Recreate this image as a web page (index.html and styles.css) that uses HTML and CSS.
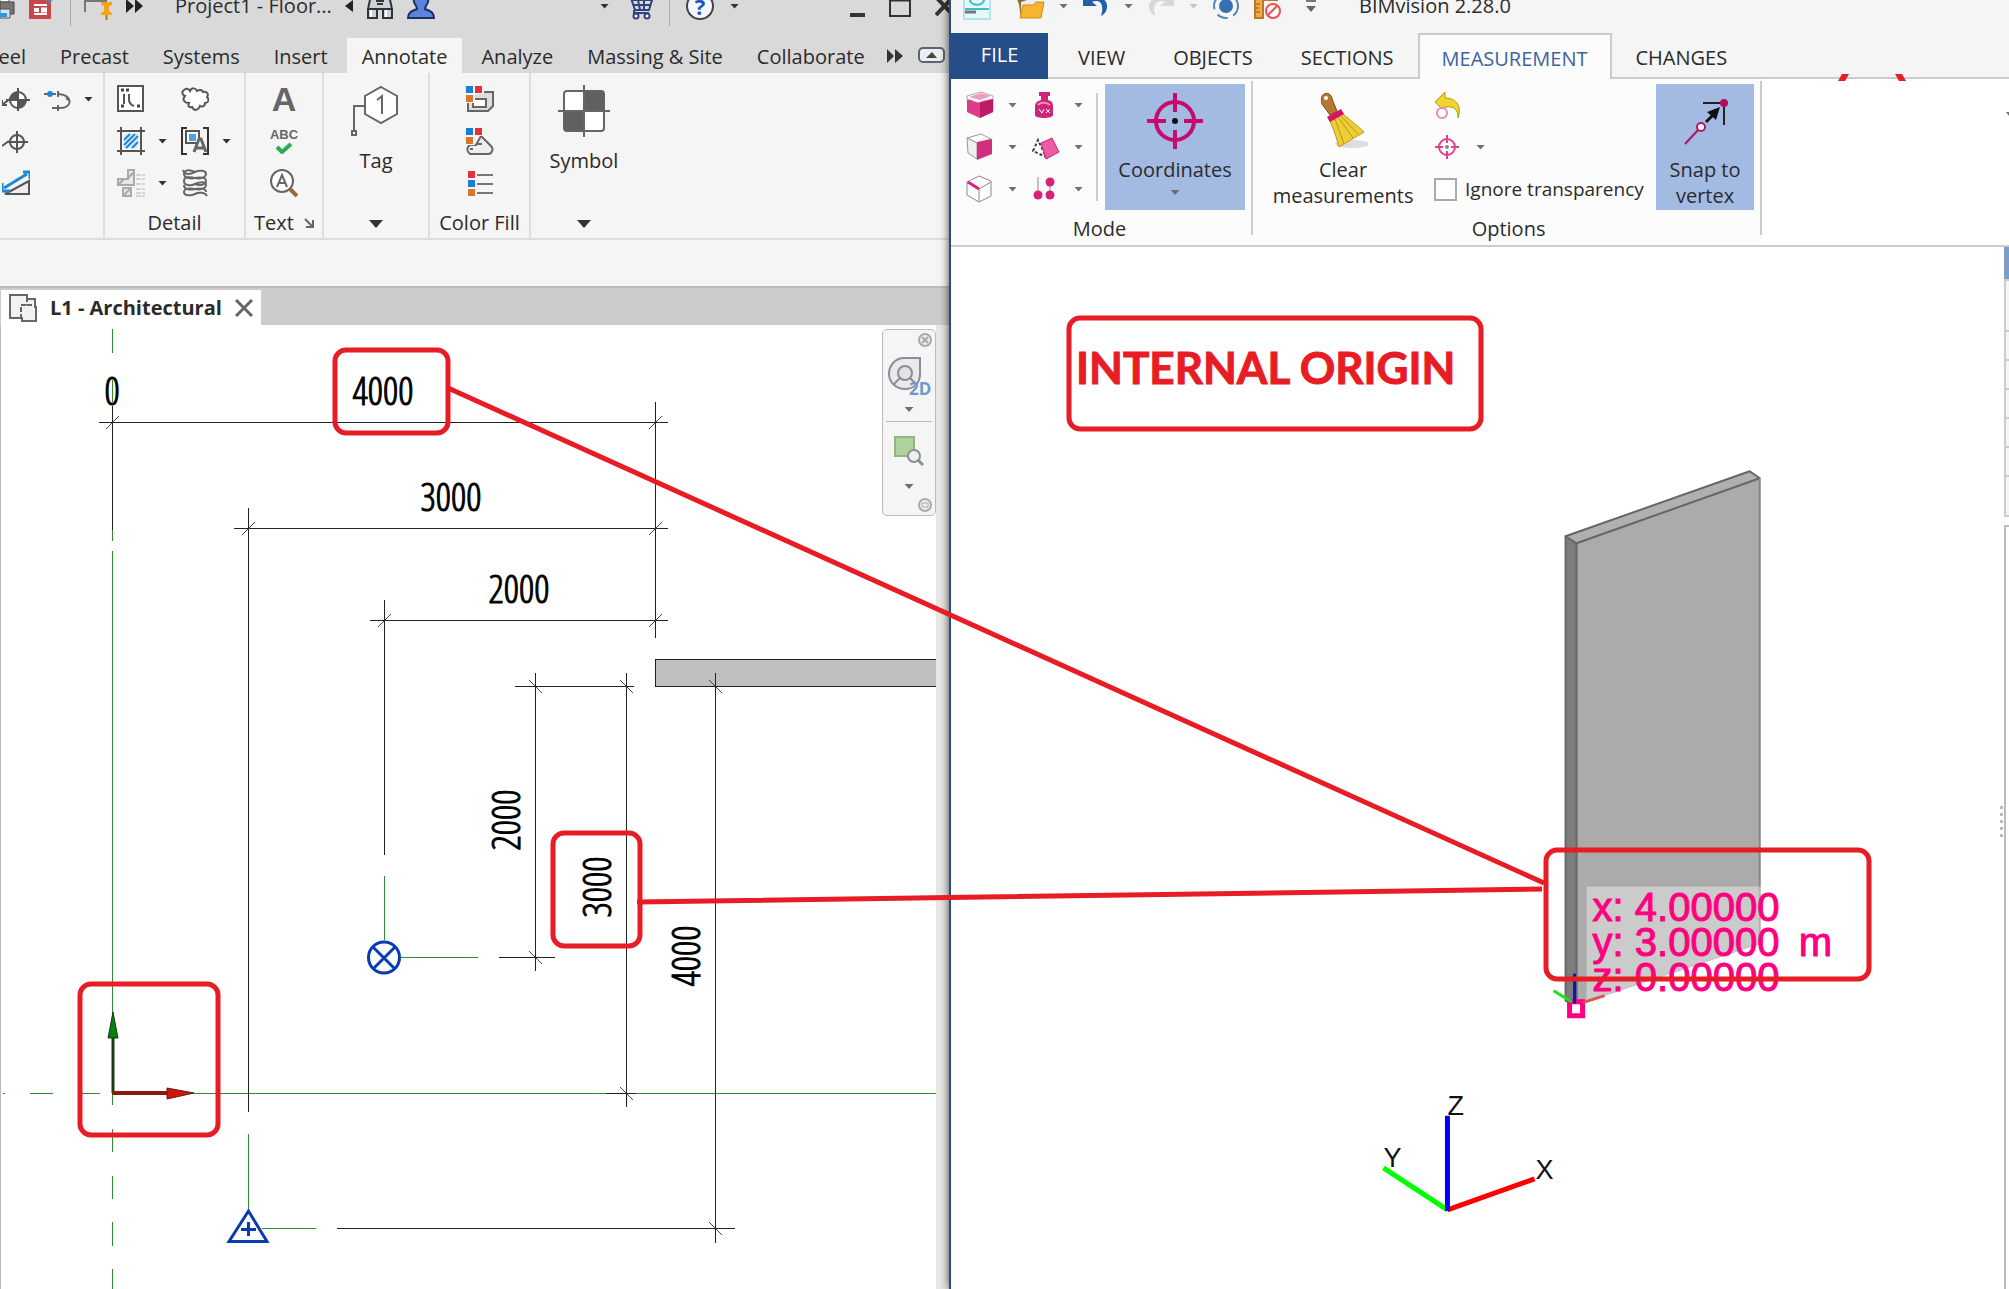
FILE: index.html
```html
<!DOCTYPE html>
<html lang="en">
<head>
<meta charset="utf-8">
<title>Internal origin</title>
<link rel="stylesheet" href="styles.css">
</head>
<body>
<main class="desk">

<section class="window revit">
  <header class="titlebar">
    <div class="title-row">
      <button class="icon" aria-label="Print"><svg width="16" height="28" viewBox="0 0 16 28"><path d="M0 4h9v6H0z" fill="#fff" stroke="#666"/><path d="M0 10h14v12H0z" fill="#777" stroke="#444"/><path d="M0 17h10v9H0z" fill="#cde6fa" stroke="#555"/><path d="M0 21h7v4H0z" fill="#2f95e0"/></svg></button>
      <button class="icon" aria-label="Export PDF"><svg width="28" height="28" viewBox="0 0 28 28"><path d="M0 2h22v25H0z" fill="#c8474b"/><path d="M5 13h13M5 22h13M5 17h5M5 19h5" stroke="#fff" stroke-width="2"/><path d="M12 15.500h6v5h-6z" fill="#fff"/><path d="M12 6h8V0l8 6-8 4z" fill="#2b8fe0"/></svg></button>
      <span class="bar"></span>
      <button class="icon" aria-label="Aligned dimension"><svg width="28" height="28" viewBox="0 0 28 28"><path d="M1 6v14M1 9h22" stroke="#777" stroke-width="2" fill="none"/><path d="M17 10h11v3l-3 1v5l3 2v2H17v-2l3-2v-5l-3-1z" fill="#f2a614"/><path d="M22.500 23v5" stroke="#a87a1c" stroke-width="2"/></svg></button>
      <button class="icon" aria-label="More tools"><svg width="18" height="14" viewBox="0 0 18 14"><path d="M1 0l8 7-8 7zM10 0l8 7-8 7z" fill="#222"/></svg></button>
      <h1 class="doc-title">Project1 - Floor...</h1>
      <button class="icon" aria-label="Collapse search"><svg width="8" height="12" viewBox="0 0 8 12"><path d="M8 0v12L0 6z" fill="#222"/></svg></button>
      <button class="icon" aria-label="Search"><svg width="28" height="28" viewBox="0 0 28 28"><path d="M5 3h6v6h6V3h6l3 14v9h-9v-9h-6v9H2v-9z" fill="#ccd1d8" stroke="#333" stroke-width="2"/><path d="M2 17h9M17 17h9M11 12h6" stroke="#333" stroke-width="2"/><path d="M5 18v7M20 18v7" stroke="#fff" stroke-width="2"/></svg></button>
      <button class="icon" aria-label="Sign in"><svg width="28" height="28" viewBox="0 0 28 28"><path d="M14 1c5 0 8 4 7 9-1 3-3 4-3 7 5 2 9 3 9 9H1c0-6 4-7 9-9 0-3-2-4-3-7-1-5 2-9 7-9z" fill="#5b84de" stroke="#1d2f62" stroke-width="2"/></svg></button>
      <div class="title-right">
        <span class="caret dark"></span>
        <button class="icon" aria-label="Store"><svg width="28" height="28" viewBox="0 0 28 28"><path d="M1 3h4l5 15h14l3-10H7M8 13h17M13 8l2 10M19 8v10" fill="none" stroke="#31427e" stroke-width="2"/><path d="M9 18v3h15" fill="none" stroke="#31427e" stroke-width="2"/><circle cx="11" cy="24" r="2.500" fill="#fff" stroke="#31427e" stroke-width="2"/><circle cx="22" cy="24" r="2.500" fill="#fff" stroke="#31427e" stroke-width="2"/></svg></button>
        <span class="bar"></span>
        <button class="icon help" aria-label="Help">?</button>
        <span class="caret dark"></span>
      </div>
      <div class="win-buttons">
        <button class="icon" aria-label="Minimize"><svg width="15" height="22" viewBox="0 0 15 22"><path d="M0 20h15" stroke="#333" stroke-width="4"/></svg></button>
        <button class="icon" aria-label="Maximize"><svg width="22" height="24" viewBox="0 0 22 24"><path d="M1 4h20v18H1z" fill="none" stroke="#333" stroke-width="2"/><path d="M0 6h22" stroke="#333" stroke-width="3"/></svg></button>
        <button class="icon" aria-label="Close"><svg width="14" height="20" viewBox="0 0 14 20"><path d="M1 1l17 18M18 1L1 19" stroke="#333" stroke-width="4"/></svg></button>
      </div>
    </div>
  </header>

  <nav class="tabs" aria-label="Ribbon tabs">
    <button class="tab cut">Steel</button>
    <button class="tab">Precast</button>
    <button class="tab">Systems</button>
    <button class="tab">Insert</button>
    <button class="tab on">Annotate</button>
    <button class="tab">Analyze</button>
    <button class="tab">Massing &amp; Site</button>
    <button class="tab">Collaborate</button>
    <div class="tab-tools">
      <button class="icon" aria-label="More tabs"><svg width="16" height="14" viewBox="0 0 16 14"><path d="M0 0l7 7-7 7zM8 0l8 7-8 7z" fill="#333"/></svg></button>
      <button class="icon" aria-label="Minimize ribbon"><svg width="28" height="17" viewBox="0 0 28 17"><rect x="1" y="1" width="25" height="14" rx="4" fill="#eceff2" stroke="#5a6472" stroke-width="2"/><path d="M8 11h11l-5-6z" fill="#444"/></svg></button>
    </div>
  </nav>

  <div class="ribbon">
    <div class="panel p-first">
      <div class="grid g3">
        <button class="icon" aria-label="Spot elevation"><svg width="28" height="28" viewBox="0 0 28 28"><circle cx="16" cy="15" r="8" fill="#fff" stroke="#555" stroke-width="2"/><path d="M16 7v8H8a8 8 0 0 1 8-8zM16 23v-8h8a8 8 0 0 1-8 8z" fill="#555"/><path d="M16 3v23M4 15h24M8 14l-7 5M0 15v5h5" fill="none" stroke="#555" stroke-width="2"/></svg></button>
        <button class="icon" aria-label="Linear array"><svg width="28" height="28" viewBox="0 0 28 28"><path d="M1 9h12M16 9c14 1 14 14 1 14M9 23h10M15 6v6M15 20v6M23 13l4 3" fill="none" stroke="#666" stroke-width="2"/><circle cx="7" cy="9" r="3" fill="#1e88d8"/></svg></button>
        <span class="caret dark"></span>
        <button class="icon" aria-label="Spot coordinate"><svg width="28" height="28" viewBox="0 0 28 28"><circle cx="15" cy="15" r="7" fill="none" stroke="#555" stroke-width="2"/><path d="M15 4v22M5 15h21M7 14l-7 5" fill="none" stroke="#555" stroke-width="2"/></svg></button><i></i><i></i>
        <button class="icon" aria-label="Spot slope"><svg width="28" height="28" viewBox="0 0 28 28"><path d="M3 25h24V12z" fill="#eee" stroke="#555" stroke-width="2"/><path d="M2 19L25 5M21 3h7v7M0 14v8h8" fill="none" stroke="#1e88d8" stroke-width="3"/></svg></button>
      </div>
    </div>
    <div class="panel">
      <div class="grid g4">
        <button class="icon" aria-label="Detail line"><svg width="28" height="28" viewBox="0 0 28 28"><path d="M1 1h25v25H1z" fill="#fff" stroke="#555" stroke-width="2"/><path d="M4 5h3M9 5h3M4 21h3M20 21h3" stroke="#444" stroke-width="3"/><path d="M7 9v10M12 9v5c0 4 2 6 5 7" fill="none" stroke="#555" stroke-width="2"/></svg></button><i></i>
        <button class="icon" aria-label="Revision cloud"><svg width="28" height="28" viewBox="0 0 28 28"><path d="M2 6c3-4 6-2 7 0 2-4 6-3 7 0 3-2 5-1 6 1 4-1 6 2 4 5 3 3 1 6-2 6 0 4-4 4-5 3-2 5-6 5-8 1-4 1-4-2-3-4-5 0-7-4-4-7-3-1-3-4-2-5z" fill="#fff" stroke="#555" stroke-width="2"/></svg></button><i></i>
        <button class="icon" aria-label="Region"><svg width="28" height="28" viewBox="0 0 28 28"><path d="M7 7h14v14H7z" fill="#d4eafb"/><path d="M7 13l6-6M7 18L18 7M9 21L21 9M15 21l6-6" stroke="#1e88d8" stroke-width="2"/><path d="M4 0v28M24 0v28M0 4h28M0 24h28" stroke="#555" stroke-width="2"/></svg></button>
        <span class="caret dark"></span>
        <button class="icon" aria-label="Detail group"><svg width="28" height="28" viewBox="0 0 28 28"><path d="M6 1H1v26h5M22 1h5v26h-5" fill="none" stroke="#333" stroke-width="2"/><path d="M5 4h13v12H5z" fill="#fff" stroke="#555" stroke-width="2"/><path d="M8 7h7v7H8z" fill="#4ba3e4"/><path d="M13 25l5-13h2l5 13M15 21h8" fill="#f5f5f5" stroke="#666" stroke-width="3"/></svg></button>
        <span class="caret dark"></span>
        <button class="icon" aria-label="Component"><svg width="28" height="28" viewBox="0 0 28 28"><path d="M11 1h6v15H1v-6h10zM6 19h8v8H6zM6 27l8-8M1 16l6-6M11 9l6-6" fill="#e8e8e8" stroke="#aaa" stroke-width="2"/><path d="M19 6h9M19 10h9M19 15h9M19 20h9M19 24h9M19 27h9" stroke="#b4b4b4" stroke-width="1" stroke-dasharray="5 1"/></svg></button>
        <span class="caret dark"></span>
        <button class="icon" aria-label="Insulation"><svg width="28" height="28" viewBox="0 0 28 28"><path d="M3 1C4 5 9 6 14 4S25 1 25 5s-6 5-11 4S3 8 3 14s6 6 11 4 11-5 11-2 0-6-5-7-6 0-9 1" fill="none" stroke="none"/><path d="M2 1c2 6 8 4 12 2s11-2 11 2-7 5-11 4-11-2-11 3 7 5 11 3 11-3 11 1-7 5-11 4-11-1-11 3 7 4 11 2 10-2 12 2" fill="none" stroke="#666" stroke-width="2"/><path d="M14 3C8 0 3 1 3 5s7 5 11 4 11-1 11 3-7 5-11 3M3 16c0 5 7 5 11 4s11-1 11 3" fill="none" stroke="#666" stroke-width="2"/></svg></button>
      </div>
      <h2 class="label">Detail</h2>
    </div>
    <div class="panel p-text">
      <div class="grid g1">
        <button class="icon glyph" aria-label="Text">A</button>
        <button class="icon abc" aria-label="Check spelling">ABC<svg width="18" height="12" viewBox="0 0 18 12"><path d="M2 5l5 5 9-8" fill="none" stroke="#2dab55" stroke-width="4"/></svg></button>
        <button class="icon" aria-label="Find and replace"><svg width="28" height="28" viewBox="0 0 28 28"><circle cx="12" cy="12" r="11" fill="#fff" stroke="#666" stroke-width="2"/><path d="M7 18l5-12 5 12M9 14h6" fill="none" stroke="#666" stroke-width="2"/><path d="M20 20l7 7" stroke="#9a6a35" stroke-width="4"/></svg></button>
      </div>
      <h2 class="label">Text <svg width="10" height="10" viewBox="0 0 10 10"><path d="M1 1l7 7M9 2v7H2" fill="none" stroke="#666" stroke-width="2"/></svg></h2>
    </div>
    <div class="panel p-big">
      <button class="big">
        <svg width="52" height="52" viewBox="0 0 52 52"><path d="M31 2l16 9v18l-16 9-16-9V11z" fill="#fff" stroke="#666" stroke-width="2"/><path d="M15 21H4v26M27 15l5-4v18" fill="none" stroke="#666" stroke-width="2"/><path d="M2 46h4v4H2z" fill="#fff" stroke="#666" stroke-width="2"/></svg>
        Tag</button>
      <span class="caret dark wide"></span>
    </div>
    <div class="panel p-fill">
      <div class="grid g1">
        <button class="icon" aria-label="Duct legend"><svg width="28" height="28" viewBox="0 0 28 28"><path d="M2 26V18l7-11h18v14l-5 5z" fill="#ddd" stroke="#666" stroke-width="2"/><path d="M7 14h13v8H7z" fill="#fff" stroke="#666" stroke-width="2"/><path d="M0 0h18v9H9v9H0z" fill="#f5f5f5"/><path d="M0 1h7v7H0z" fill="#1580d8"/><path d="M9 1h7v7H9z" fill="#e8303a"/><path d="M0 10h7v7H0z" fill="#d8772b"/></svg></button>
        <button class="icon" aria-label="Pipe legend"><svg width="28" height="28" viewBox="0 0 28 28"><path d="M4 27c-5-4-2-10 3-9h3l5-9 10 10c3 3 1 8-3 8z" fill="#eee" stroke="#666" stroke-width="2"/><path d="M10 17h6M4 22h3" stroke="#666" stroke-width="2"/><path d="M0 0h17v9H9v9H0z" fill="#f5f5f5"/><path d="M0 1h7v7H0z" fill="#1580d8"/><path d="M9 1h7v7H9z" fill="#e8303a"/><path d="M0 10h7v7H0z" fill="#d8772b"/></svg></button>
        <button class="icon" aria-label="Color fill legend"><svg width="28" height="28" viewBox="0 0 28 28"><path d="M2 2h7v7H2z" fill="#e8303a"/><path d="M2 11h7v7H2z" fill="#1580d8"/><path d="M2 20h7v7H2z" fill="#d8772b"/><path d="M11 6h16M11 15h16M11 24h16" stroke="#777" stroke-width="2"/></svg></button>
      </div>
      <h2 class="label">Color Fill</h2>
    </div>
    <div class="panel p-big last">
      <button class="big">
        <svg width="52" height="52" viewBox="0 0 52 52"><rect x="6" y="6" width="40" height="40" rx="3" fill="#fff" stroke="#666" stroke-width="2"/><path d="M26 6h17a3 3 0 0 1 3 3v17H26zM26 26H6v17a3 3 0 0 0 3 3h17z" fill="#606060"/><path d="M26 0v52M0 26h52" stroke="#666" stroke-width="2"/></svg>
        Symbol</button>
      <span class="caret dark wide"></span>
    </div>
  </div>
  <div class="options-bar"></div>
  <div class="doc-tabs">
    <div class="doc-tab">
      <svg width="28" height="28" viewBox="0 0 28 28"><path d="M1 1h17v4h8v8h1v14H13v-3H1z" fill="#f2f2f2" stroke="#666" stroke-width="2"/><path d="M18 3v8M18 11h9M12 11h5M12 13v13" fill="none" stroke="#666" stroke-width="2" stroke-dasharray="5 2"/></svg>
      <span>L1 - Architectural</span>
      <button class="icon" aria-label="Close view"><svg width="18" height="18" viewBox="0 0 18 18"><path d="M1 1l16 16M17 1L1 17" stroke="#666" stroke-width="3"/></svg></button>
    </div>
  </div>

  <div class="plan">
    <svg class="drawing" viewBox="0 325 950 964" preserveAspectRatio="xMinYMin slice" role="img" aria-label="Floor plan with dimensions">
      <g class="ref">
        <path d="M112.500 329v24M112.500 380v22M112.500 530v11M112.500 551v554M112.500 1129v23M112.500 1176v23M112.500 1222v24M112.500 1269v20"/>
        <path d="M3 1093.500h2M30 1093.500h23M78 1093.500h22M112 1093.500h825"/>
        <path d="M384.500 876v64M401 957.500h77M248.500 1134v76M262 1228.500h54"/>
      </g>
      <path d="M655.500 659.500H937M655.500 686.500H937M655.500 659v28" class="dim"/>
      <path d="M656 660h281v26H656z" fill="#bfbfbf"/>
      <g class="dim">
        <path d="M112.500 406v124M99 422.500h569M655.500 402v236"/>
        <path d="M234 528.500h434M248.500 508v604"/>
        <path d="M370 620.500h298M384.500 600v255"/>
        <path d="M515 686.500h119M535.500 673v298M499 957.500h56M626.500 673v434M606 1093.500h30M715.500 673v570M337 1228.500h398"/>
      </g>
      <path class="tick" d="M106 429l13-13M649 429l13-13M242 535l13-13M649 535l13-13M378 627l13-13M649 627l13-13M529 680l13 13M620 680l13 13M709 680l13 13M529 951l13 13M620 1087l13 13M709 1222l13 13"/>
      <g class="num">
        <text x="112" y="405">0</text>
        <text x="383" y="405">4000</text>
        <text x="451" y="511">3000</text>
        <text x="519" y="603">2000</text>
        <text transform="rotate(-90 520 820)" x="520" y="820">2000</text>
        <text transform="rotate(-90 611 887)" x="611" y="887">3000</text>
        <text transform="rotate(-90 700 956)" x="700" y="956">4000</text>
      </g>
      <g fill="none" stroke="#0a3bb0" stroke-width="3">
        <circle cx="384" cy="957.500" r="15.500"/><path d="M373 947l22 22M395 947l-22 22"/>
        <path d="M248.500 1211L229 1241.500h38z"/><path d="M241 1229.500h15M248.500 1222v14"/>
      </g>
      <path d="M113 1093v-60" stroke="#173d14" stroke-width="3"/><path d="M113 1012l5 26h-10z" fill="#0b7d11" stroke="#173d14"/>
      <path d="M112 1093h58" stroke="#8a1a10" stroke-width="4"/><path d="M194 1093l-27-5v11z" fill="#d01510" stroke="#6b1a10"/>
    </svg>
    <div class="scroll"></div>
    <div class="navbar">
      <button class="icon nav-x" aria-label="Close navigation bar"><svg width="14" height="14" viewBox="0 0 14 14"><circle cx="7" cy="7" r="6" fill="#eee" stroke="#aaa" stroke-width="2"/><path d="M4 4l6 6M10 4l-6 6" stroke="#aaa" stroke-width="2"/></svg></button>
      <button class="icon" aria-label="Steering wheel 2D"><svg width="44" height="42" viewBox="0 0 44 42"><path d="M17 2h16v16c0 9-6 15-15 15S2 26 2 18 8 2 17 2z" fill="#e8eaee" stroke="#8a8d93" stroke-width="2"/><circle cx="18" cy="17" r="7" fill="#dfe3e8" stroke="#8a8d93" stroke-width="2"/><path d="M13 22l-6 6M23 22l6 6" stroke="#8a8d93" stroke-width="2"/><text x="22" y="39" class="two-d">2D</text></svg></button>
      <span class="caret"></span>
      <hr>
      <button class="icon zoom" aria-label="Zoom region"><svg width="30" height="30" viewBox="0 0 30 30"><path d="M1 1h19v19H1z" fill="#afd19c" stroke="#93b582" stroke-width="2"/><circle cx="20" cy="20" r="6" fill="#eef1f4" stroke="#8d8f92" stroke-width="2"/><path d="M24 24l5 5" stroke="#8d8f92" stroke-width="3"/></svg></button>
      <span class="caret"></span>
      <button class="icon nav-x" aria-label="Navigation options"><svg width="14" height="14" viewBox="0 0 14 14"><circle cx="7" cy="7" r="6" fill="#eee" stroke="#aaa" stroke-width="2"/><path d="M4 5h6v4H4z" fill="none" stroke="#aaa"/></svg></button>
    </div>
  </div>
</section>

<section class="window bim">
  <header class="titlebar">
    <div class="title-row">
      <svg width="28" height="28" viewBox="0 0 28 28"><path d="M1 1h26v26H1z" fill="#e6f8f8" stroke="#b4e4e6" stroke-width="2"/><path d="M7 9c2-5 12-5 14 0-3 5-11 5-14 0zM2 17h24" fill="none" stroke="#3cc3c8" stroke-width="2"/><path d="M2 20h11" stroke="#777" stroke-width="3"/></svg>
      <button class="icon m22" aria-label="Open"><svg width="30" height="28" viewBox="0 0 30 28"><path d="M1 5h14l9-3v24H6L4 12z" fill="#8a6a30"/><path d="M6 10l18-6v20H6z" fill="#eee"/><path d="M5 26l3-13h10l3-3h8l-3 16z" fill="#f5b52e" stroke="#cf9015"/></svg></button>
      <span class="caret m13"></span>
      <button class="icon m13" aria-label="Undo"><svg width="28" height="28" viewBox="0 0 28 28"><path d="M1 0v14h14l-5-4c7-3 13 1 9 14 10-5 9-23-13-19z" fill="#2160a8"/></svg></button>
      <span class="caret m13"></span>
      <button class="icon m13" aria-label="Redo"><svg width="28" height="28" viewBox="0 0 28 28"><path d="M27 0v14H13l5-4c-7-3-13 1-10 14C-2 19-1 1 22 5z" fill="#d8d8d8"/></svg></button>
      <span class="caret faint m13"></span>
      <button class="icon m13" aria-label="Show all"><svg width="28" height="28" viewBox="0 0 28 28"><circle cx="14" cy="14" r="7" fill="#3670ae"/><circle cx="14" cy="14" r="12" fill="none" stroke="#5584b8" stroke-width="2" stroke-dasharray="11 6"/></svg></button>
      <button class="icon m13" aria-label="Clear measurement"><svg width="28" height="28" viewBox="0 0 28 28"><path d="M1 1h22v7H9v18H1z" fill="#f3a844" stroke="#b57a2c" stroke-width="2"/><path d="M2 12h4M2 16h3M2 20h4" stroke="#7b5320" stroke-width="1"/><circle cx="19" cy="19" r="7" fill="#fff" stroke="#ee5050" stroke-width="2"/><path d="M14 23l9-9" stroke="#ee5050" stroke-width="2"/></svg></button>
      <button class="icon m22" aria-label="Customize"><svg width="10" height="14" viewBox="0 0 10 14"><path d="M0 2h10" stroke="#777" stroke-width="2"/><path d="M0 7h10l-5 6z" fill="#666"/></svg></button>
      <h1 class="doc-title">BIMvision 2.28.0</h1>
    </div>
  </header>
  <nav class="tabs" aria-label="Ribbon tabs">
    <button class="tab file">FILE</button>
    <span class="rest lead"></span>
    <button class="tab">VIEW</button>
    <button class="tab">OBJECTS</button>
    <button class="tab">SECTIONS</button>
    <button class="tab on">MEASUREMENT</button>
    <button class="tab">CHANGES</button>
    <span class="rest"></span>
  </nav>
  <div class="ribbon">
    <div class="group">
      <div class="tools">
        <div class="grid g4">
          <button class="icon" aria-label="Volume"><svg width="28" height="28" viewBox="0 0 28 28"><path d="M1 5l14-4 12 4v15l-13 6-12-5z" fill="#fff" stroke="#aaa"/><path d="M1 9c4-2 9 4 13 2s9-2 13-3v13l-13 6-13-6z" fill="#de3c8a"/><path d="M14 12v15l13-6V8z" fill="#bd1a69"/><path d="M3 6l11 3 11-4-10-3z" fill="#f39ac5"/></svg></button><span class="caret"></span>
          <button class="icon" aria-label="Weight"><svg width="28" height="28" viewBox="0 0 28 28"><path d="M7 1h11v4h-2v4c4 1 5 3 5 6v9c0 4-18 4-18 0v-9c0-3 2-5 6-6V5H7z" fill="#cd2676"/><path d="M6 14c2-3 9-3 12 0" stroke="#f28dbb" stroke-width="2" fill="none"/><path d="M7 18l3 4 2-4M14 18l4 4M18 18l-4 4" stroke="#fff" fill="none"/></svg></button><span class="caret"></span>
          <button class="icon" aria-label="Area"><svg width="28" height="28" viewBox="0 0 28 28"><path d="M1 5l14-4 10 5-14 4z" fill="#fff" stroke="#999"/><path d="M1 5l10 5v16L2 20z" fill="#f0f0f0" stroke="#999"/><path d="M11 9l15-3v15l-15 6z" fill="#d42d7f"/></svg></button><span class="caret"></span>
          <button class="icon" aria-label="Surface"><svg width="28" height="28" viewBox="0 0 28 28"><path d="M1 18l5-11 8 17z" fill="#fff" stroke="#444" stroke-width="2" stroke-dasharray="3 2"/><path d="M9 10l11-5 7 14-13 7z" fill="#ec5ba4" stroke="#bd2a72"/></svg></button><span class="caret"></span>
          <button class="icon" aria-label="Edge"><svg width="28" height="28" viewBox="0 0 28 28"><path d="M1 7l12-6 12 5v15l-12 6-12-7zM1 7l12 7 12-7M13 14v13" fill="#fff" stroke="#888"/><path d="M2 7l11 7" stroke="#dd2079" stroke-width="3"/></svg></button><span class="caret"></span>
          <button class="icon" aria-label="Count"><svg width="28" height="28" viewBox="0 0 28 28"><path d="M6 2v18M18 6v14" stroke="#888"/><circle cx="6" cy="20" r="4.500" fill="#d62377"/><circle cx="18" cy="20" r="4.500" fill="#d62377"/><circle cx="18" cy="7" r="4.500" fill="#d62377"/></svg></button><span class="caret"></span>
        </div>
        <span class="rule"></span>
        <button class="tall on">
          <svg width="58" height="58" viewBox="0 0 58 58"><circle cx="29" cy="29" r="19" fill="none" stroke="#c70a6b" stroke-width="4"/><path d="M29 1v19M29 38v19M1 29h19M38 29h19" stroke="#c70a6b" stroke-width="4"/><circle cx="29" cy="29" r="3" fill="#111"/></svg>
          <span>Coordinates</span><span class="caret"></span></button>
      </div>
      <h2 class="label">Mode</h2>
    </div>
    <div class="group g-options">
      <div class="tools">
        <button class="tall clear">
          <svg width="58" height="58" viewBox="0 0 58 58"><ellipse cx="38" cy="52" rx="17" ry="4" fill="#ddd"/><path d="M9 3c4-4 9 0 9 4l5 12-7 4L8 12c-1-3-1-7 1-9z" fill="#b97831" stroke="#75481a"/><circle cx="12" cy="6" r="2" fill="#fff"/><path d="M14 25l12-6c7 7 18 15 24 21l-25 15c-3-11-6-20-11-30z" fill="#edcf35" stroke="#b8981b"/><path d="M21 27l9 25M24 25l15 21M27 24l17 18" stroke="#b8981b"/><path d="M13 25l14-8 3 5-14 8z" fill="#d3126c"/></svg>
          <span>Clear<br>measurements</span></button>
        <div class="opts">
          <button class="icon" aria-label="Undo measurement"><svg width="28" height="28" viewBox="0 0 28 28"><path d="M1 11L11 1v6c12 0 17 9 13 20 0-9-4-12-13-11v5z" fill="#f0d42e" stroke="#b49516"/><circle cx="8" cy="22" r="5" fill="#fff" stroke="#e48bb8" stroke-width="2"/></svg></button>
          <div class="pair"><button class="icon" aria-label="Snap mode"><svg width="28" height="28" viewBox="0 0 28 28"><circle cx="13" cy="14" r="8" fill="none" stroke="#e3408b" stroke-width="2"/><path d="M13 2v8M13 18v8M1 14h8M17 14h8" stroke="#e3408b" stroke-width="2"/><circle cx="13" cy="14" r="2" fill="#888"/></svg></button><span class="caret"></span></div>
          <label class="check"><input type="checkbox"> Ignore transparency</label>
        </div>
        <button class="tall on snap">
          <svg width="58" height="58" viewBox="0 0 58 58"><path d="M9 52l14-15" stroke="#a81660" stroke-width="2"/><circle cx="25" cy="35" r="4" fill="#fff" stroke="#b5126a" stroke-width="2"/><path d="M27 11h21v22" fill="none" stroke="#222" stroke-width="2"/><path d="M30 30l8-8" stroke="#111" stroke-width="3"/><path d="M44 15l-4 13-9-8z" fill="#111"/><circle cx="48" cy="11" r="4" fill="#b80a5e"/></svg>
          <span>Snap to<br>vertex</span></button>
      </div>
      <h2 class="label">Options</h2>
    </div>
    <button class="more" aria-label="More ribbon groups"><svg width="3" height="4" viewBox="0 0 3 4"><path d="M0 0h3v4z" fill="#707070"/></svg></button>
  </div>
  <div class="viewer">
    <svg class="drawing" viewBox="952 247 1046 1042" preserveAspectRatio="xMinYMin slice" role="img" aria-label="Wall with coordinates">
      <g stroke="#666" stroke-width="2" stroke-linejoin="round">
        <path d="M1577 543l183-65v465l-183 61z" fill="#ababab" stroke="none"/>
        <path d="M1566 536l11 7v461l-11-4z" fill="#7d7d7d"/>
        <path d="M1566 536l184-65 10 7-183 65z" fill="#b0b0b0"/>
        <path d="M1760 478v465" fill="none" stroke="#858585"/>
      </g>
      <path d="M1577 1004l183-61" stroke="#999"/>
      <path d="M1587 886h247v122h-247z" fill="#fff" opacity=".38"/>
      <path d="M1570 1001h13v14h-13z" fill="#fff" stroke="#ff007f" stroke-width="5"/>
      <path d="M1554 990l18 11" stroke="#10e818" stroke-width="3"/><path d="M1583 1002l22-7" stroke="#e05252" stroke-width="3"/><path d="M1575 973v30" stroke="#1010c8" stroke-width="3"/>
      <g class="xyz"><text x="1593" y="920">x: 4.00000</text><text x="1593" y="955">y: 3.00000</text><text x="1799" y="955">m</text><text x="1593" y="990">z: 0.00000</text></g>
      <g stroke-width="5"><path d="M1448 1209l87-31" stroke="#f00"/><path d="M1448 1209l-64-42" stroke="#0f0"/><path d="M1448 1210v-95" stroke="#00f"/></g>
      <g class="axis"><text x="1448" y="1114">Z</text><text x="1384" y="1166">Y</text><text x="1536" y="1178">X</text></g>
    </svg>
    <div class="splitter"><i></i><i></i><i></i><i></i><i></i></div>
    <aside class="side"><div class="side-head"></div><div class="side-list"><i class="tall-row"></i><i></i><i></i><i></i><i></i><i></i></div><div class="side-tree"></div></aside>
  </div>
</section>

<svg class="markup" viewBox="0 0 2009 1289" preserveAspectRatio="xMinYMin slice" role="img" aria-label="Annotations">
  <g fill="none" stroke="#e81c24" stroke-width="5">
    <rect x="335" y="350" width="113" height="83" rx="11"/>
    <rect x="80" y="984" width="138" height="151" rx="11"/>
    <rect x="553" y="833" width="87" height="113" rx="11"/>
    <rect x="1069" y="318" width="412" height="111" rx="11"/>
    <rect x="1546" y="850" width="323" height="129" rx="11"/>
    <path d="M448 388l1096 495M637 902l905-13"/>
  </g>
  <path d="M1842 74h7l-4 7h-7zM1895 74h7l4 7h-7z" fill="#e81c24"/>
  <text x="1076" y="384" class="note">INTERNAL ORIGIN</text>
</svg>
</main>
</body>
</html>
```
FILE: styles.css
```css
* { box-sizing: border-box; }
body { margin: 0; font-family: "Open Sans", "Noto Sans", sans-serif; font-size: 20px; line-height: 26px; color: #2b2b2b; }
button { font: inherit; color: inherit; background: none; border: 0; padding: 0; margin: 0; white-space: nowrap; }
svg { display: block; flex: none; }
h1, h2 { margin: 0; font-size: 20px; font-weight: 400; }
hr { margin: 0; }

.desk { position: relative; display: flex; height: 100vh; overflow: hidden; }
.window { display: flex; flex-direction: column; min-width: 0; }
.revit { flex: 950 1 0; background: #d9d9d9; }
.bim { flex: 1059 1 0; background: #fff; border-left: 2px solid #254d87; box-shadow: 0 0 9px rgba(0, 0, 0, .7); z-index: 1; }
.markup { position: absolute; inset: 0; width: 100%; height: 100%; pointer-events: none; z-index: 2; }
.note { font: 700 44px Lato, sans-serif; fill: #e81c24; stroke: #e81c24; }

.icon { display: flex; align-items: center; justify-content: center; }
.caret { width: 9px; height: 5px; background: #707070; clip-path: polygon(0 0, 100% 0, 50% 100%); align-self: center; flex: none; }
.caret.dark { background: #333; }
.caret.faint { background: #c4c4c4; }
.caret.wide { width: 14px; height: 8px; }
.bar { width: 1px; height: 40px; background: #aaa; }

.titlebar { overflow: hidden; flex: none; }
.title-row { display: flex; align-items: center; height: 32px; margin-top: -10px; white-space: nowrap; }
.revit .titlebar { height: 38px; }
.revit .title-row { gap: 13px; }
.revit .doc-title { padding-left: 19px; }
.title-right, .win-buttons { display: flex; align-items: center; gap: 16px; }
.title-right { margin-left: auto; }
.win-buttons { gap: 24px; padding-left: 98px; }
.help { width: 28px; height: 28px; border: 2px solid #444; border-radius: 50%; background: #f4f8ff; color: #2455c3; font-weight: 700; font-size: 22px; }

.tabs { display: flex; flex: none; }
.revit .tabs { height: 35px; gap: 4px; overflow: hidden; }
.revit .tab { padding: 2px 15px 0; }
.revit .tab.cut { width: 41px; direction: rtl; overflow: hidden; }
.revit .tab.on { background: #f5f5f5; }
.tab-tools { display: flex; align-items: center; gap: 15px; margin-left: auto; padding-right: 3px; }

.revit .ribbon { display: flex; height: 167px; flex: none; background: #f5f5f5; border-bottom: 2px solid #ddd; }
.panel { display: flex; flex-direction: column; justify-content: space-between; padding: 12px 12px 2px; border-right: 2px solid #dedede; flex: none; }
.panel.last { border: 0; }
.grid { display: grid; grid-auto-rows: 28px; row-gap: 14px; column-gap: 13px; }
.g3 { grid-template-columns: 28px 28px 10px; }
.g4 { grid-template-columns: 28px 10px 28px 10px; }
.g1 { grid-template-columns: 28px; justify-content: center; }
.label { text-align: center; white-space: nowrap; }
.p-first { width: 105px; padding-left: 2px; }
.p-text { width: 78px; padding: 12px 8px 2px; }
.p-text .label { display: flex; align-items: center; justify-content: space-between; }
.p-big { width: 106px; align-items: center; padding-bottom: 10px; }
.p-fill { width: 101px; padding: 12px 4px 2px; }
.big { display: flex; flex-direction: column; align-items: center; gap: 11px; }
.glyph { font: 700 34px/28px "Liberation Sans", sans-serif; color: #666; }
.abc { flex-direction: column; font: 700 13px/14px "Liberation Sans", sans-serif; color: #666; }
.options-bar { height: 46px; flex: none; background: #f5f5f5; }
.doc-tabs { height: 39px; flex: none; display: flex; padding: 2px 0 0 1px; background: #ccc; border-top: 2px solid #bdbdbd; }
.doc-tab { display: flex; align-items: center; gap: 13px; padding: 0 8px; background: #fff; font-weight: 700; white-space: nowrap; }

.plan { position: relative; flex: 1; min-height: 0; display: flex; background: #fff; border-left: 1px solid #bbb; }
.drawing { flex: 1; min-width: 0; width: 100%; height: 100%; }
.plan .drawing { margin-left: -1px; }
.scroll { position: absolute; top: 0; right: 0; bottom: 0; width: 13px; background: #e8e8e8; }
.navbar { position: absolute; top: 4px; right: 13px; width: 54px; height: 187px; display: flex; flex-direction: column; align-items: center; gap: 9px; padding: 3px; background: #f5f5f5; border: 1px solid #bbb; border-radius: 5px; }
.navbar hr { width: 100%; border: 0; border-top: 1px solid #bbb; }
.nav-x { align-self: flex-end; }
.zoom { padding: 5px 0 9px; }
.two-d { font: 700 17px "Open Sans", sans-serif; fill: #6b9bcb; }
.ref { stroke: #2f8f2f; fill: none; }
.dim { stroke: #222; fill: none; }
.tick { stroke: #444; fill: none; }
.num { font-family: "Open Sans Condensed Light", "Roboto Condensed", "Noto Sans ExtraCondensed", "Liberation Sans Narrow", "Open Sans Condensed", "Liberation Sans", sans-serif; font-size: 38px; text-anchor: middle; fill: #000; stroke: #000; }

.bim .titlebar { height: 33px; background: #f5f5f5; }
.bim .title-row { padding-left: 12px; }
.m13 { margin-left: 14px; }
.m22 { margin-left: 24px; }
.bim .doc-title { margin-left: 43px; }
.bim .tabs { height: 46px; background: #f5f5f5; }
.bim .tab { padding: 6px 24px 0; border-bottom: 2px solid #ccc; }
.bim .tab.file { width: 97px; background: #254d87; border-color: #254d87; color: #fff; padding: 0; }
.bim .tab.on { background: #fcfcfc; border: 2px solid #ccc; border-bottom: 0; color: #3d62a3; padding: 4px 22px 0; }
.rest { flex: 1; border-bottom: 2px solid #ccc; }
.rest.lead { flex: 0 0 6px; }
.bim .ribbon { display: flex; height: 168px; flex: none; border-bottom: 2px solid #ccc; background: #fff; }
.group { display: flex; flex-direction: column; gap: 6px; padding: 5px 8px 0 15px; background: linear-gradient(#ccc, #ccc) right 2px / 2px 154px no-repeat #fcfcfc; flex: none; }
.g-options { padding-left: 22px; }
.group .label { padding-right: 12px; }
.tools { display: flex; height: 126px; }
.tools .grid { column-gap: 14px; padding-top: 7px; }
.rule { width: 2px; height: 108px; margin: 9px 7px 0 12px; background: #ccc; }
.tall { display: flex; flex-direction: column; align-items: center; justify-content: flex-start; gap: 7px; padding-top: 8px; text-align: center; }
.tall.on { width: 140px; background: #a3bbe2; }
.tall.on.snap { width: 98px; margin-left: 7px; }
.tall.clear { width: 136px; }
.opts { display: flex; flex-direction: column; gap: 14px; align-items: flex-start; padding: 7px 0 0 23px; }
.pair { display: flex; align-items: center; gap: 14px; }
.opts .icon { height: 28px; }
.check { display: flex; align-items: center; gap: 8px; width: 215px; height: 28px; font-size: 19px; white-space: nowrap; }
.check input { appearance: none; width: 23px; height: 23px; margin: 0; border: 2px solid #aaa; background: #fff; }
.more { align-self: flex-start; margin-left: auto; padding-top: 33px; }

.viewer { flex: 1; min-height: 0; display: flex; background: #fff; }
.splitter { width: 6px; display: flex; flex-direction: column; justify-content: center; gap: 4px; flex: none; padding-top: 106px; }
.splitter i { width: 3px; height: 3px; margin-left: 2px; background: #bbb; }
.side { width: 5px; flex: none; display: flex; flex-direction: column; }
.side-head { height: 18px; height: 18px; background: #7f9bc8; min-height: 32px; }
.side-list { height: 238px; flex: none; margin-bottom: 8px; border: 2px solid #ccc; border-right: 0; background: #f5f5f5; }
.side-list i { display: block; height: 29px; border-bottom: 2px solid #ccc; }
.side-list .tall-row { height: 51px; }
.side-tree { flex: 1; border: 2px solid #bbb; border-right: 0; border-bottom: 0; }
.xyz { font: 40px "Liberation Sans", sans-serif; fill: #ff007f; stroke: #ff007f; }
.axis { font: 27px "Liberation Sans", sans-serif; fill: #111; }
```
